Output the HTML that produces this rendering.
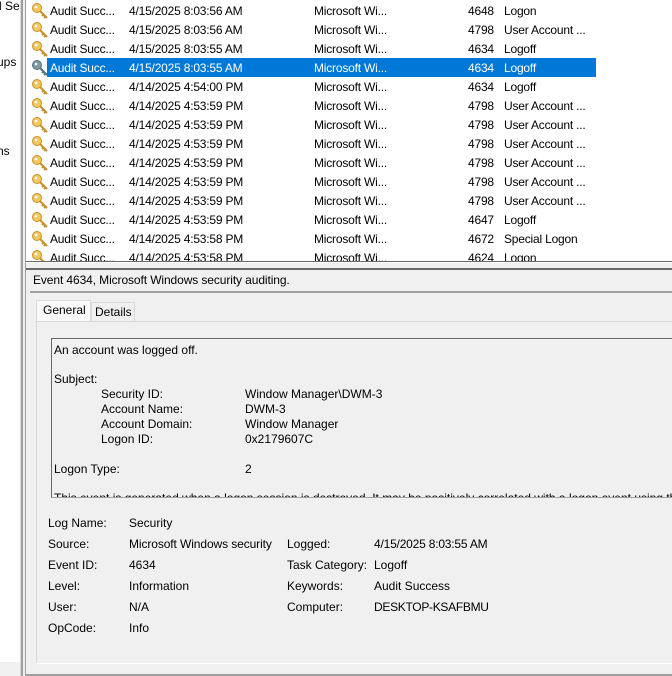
<!DOCTYPE html>
<html><head><style>
*{margin:0;padding:0;box-sizing:border-box}
body{width:672px;height:676px;overflow:hidden;background:#f0f0f0;font-family:"Liberation Sans",sans-serif;font-size:12px;color:#000;position:relative}
.a{position:absolute;white-space:nowrap}
.row{position:absolute;left:0;width:672px;height:19px;letter-spacing:-0.2px}
.row span{position:absolute;top:3px}
.sel{position:absolute;left:47px;width:549px;height:19px;top:0;background:#0078d7}
.s span{color:#fff}
.k{position:absolute;left:31px;top:1px}
</style></head><body>
<div class="a" style="left:0;top:0;width:20px;height:662px;background:#fff"></div>
<div class="a" style="left:0;top:662px;width:20px;height:14px;background:#f0f0f0"></div>
<div class="a" style="left:-1px;top:-1px;">l Se</div>
<div class="a" style="left:-3px;top:55px;">ups</div>
<div class="a" style="left:-3px;top:144px;">ns</div>
<div class="a" style="left:20px;top:0;width:1px;height:676px;background:#d8d8d8"></div>
<div class="a" style="left:21px;top:0;width:2px;height:676px;background:#a0a0a0"></div>
<div class="a" style="left:25px;top:0;width:1px;height:676px;background:#a0a0a0"></div>
<div class="a" style="left:26px;top:0;width:646px;height:261px;background:#fff;overflow:hidden">
<div style="position:relative;left:-26px" id="list"></div>
</div>
<div class="a" style="left:26px;top:261px;width:646px;height:1px;background:#696969"></div>
<div class="a" style="left:26px;top:262px;width:646px;height:1px;background:#fff"></div>
<div class="a" style="left:26px;top:268px;width:646px;height:2px;background:#6a6a6a"></div>
<div class="a" style="left:33px;top:273px;letter-spacing:-0.1px">Event 4634, Microsoft Windows security auditing.</div>
<div class="a" style="left:30px;top:291px;width:642px;height:2px;background:#a0a0a0"></div>
<div class="a" style="left:36px;top:300px;width:55px;height:22px;background:#f9f9f9;border:1px solid #d9d9d9;border-bottom:none"></div>
<div class="a" style="left:43px;top:303px;">General</div>
<div class="a" style="left:91px;top:302px;width:44px;height:19px;border:1px solid #d9d9d9;border-bottom:none"></div>
<div class="a" style="left:95px;top:305px;">Details</div>
<div class="a" style="left:36px;top:321px;width:640px;height:343px;border:1px solid #d9d9d9;border-right:none"></div>
<div class="a" style="left:51px;top:338px;width:625px;height:160px;border-left:1px solid #6a6a6a;border-top:1px solid #6a6a6a;border-bottom:1px solid #a0a0a0;overflow:hidden">
<div class="a" style="left:2px;top:4px">An account was logged off.</div>
<div class="a" style="left:2px;top:33px">Subject:</div>
<div class="a" style="left:49px;top:48px">Security ID:</div><div class="a" style="left:193px;top:48px">Window Manager\DWM-3</div>
<div class="a" style="left:49px;top:63px">Account Name:</div><div class="a" style="left:193px;top:63px">DWM-3</div>
<div class="a" style="left:49px;top:78px">Account Domain:</div><div class="a" style="left:193px;top:78px">Window Manager</div>
<div class="a" style="left:49px;top:93px">Logon ID:</div><div class="a" style="left:193px;top:93px">0x2179607C</div>
<div class="a" style="left:2px;top:123px">Logon Type:</div><div class="a" style="left:193px;top:123px">2</div>
<div class="a" style="left:2px;top:152px">This event is generated when a logon session is destroyed. It may be positively correlated with a logon event using the</div>
</div>
<div class="a" style="left:48px;top:516px">Log Name:</div><div class="a" style="left:129px;top:516px">Security</div>
<div class="a" style="left:48px;top:537px">Source:</div><div class="a" style="left:129px;top:537px;letter-spacing:-0.1px">Microsoft Windows security</div>
<div class="a" style="left:287px;top:537px">Logged:</div><div class="a" style="left:374px;top:537px;letter-spacing:-0.2px">4/15/2025 8:03:55 AM</div>
<div class="a" style="left:48px;top:558px">Event ID:</div><div class="a" style="left:129px;top:558px">4634</div>
<div class="a" style="left:287px;top:558px">Task Category:</div><div class="a" style="left:374px;top:558px">Logoff</div>
<div class="a" style="left:48px;top:579px">Level:</div><div class="a" style="left:129px;top:579px">Information</div>
<div class="a" style="left:287px;top:579px">Keywords:</div><div class="a" style="left:374px;top:579px">Audit Success</div>
<div class="a" style="left:48px;top:600px">User:</div><div class="a" style="left:129px;top:600px">N/A</div>
<div class="a" style="left:287px;top:600px">Computer:</div><div class="a" style="left:374px;top:600px;letter-spacing:-0.3px">DESKTOP-KSAFBMU</div>
<div class="a" style="left:48px;top:621px">OpCode:</div><div class="a" style="left:129px;top:621px">Info</div>
<div class="a" style="left:36px;top:663px;width:636px;height:1px;background:#fff"></div>
<div class="a" style="left:26px;top:674px;width:646px;height:2px;background:#a0a0a0"></div>
<script>
var rows=[["4/15/2025 8:03:56 AM","4648","Logon"],["4/15/2025 8:03:56 AM","4798","User Account ..."],["4/15/2025 8:03:55 AM","4634","Logoff"],["4/15/2025 8:03:55 AM","4634","Logoff"],["4/14/2025 4:54:00 PM","4634","Logoff"],["4/14/2025 4:53:59 PM","4798","User Account ..."],["4/14/2025 4:53:59 PM","4798","User Account ..."],["4/14/2025 4:53:59 PM","4798","User Account ..."],["4/14/2025 4:53:59 PM","4798","User Account ..."],["4/14/2025 4:53:59 PM","4798","User Account ..."],["4/14/2025 4:53:59 PM","4798","User Account ..."],["4/14/2025 4:53:59 PM","4647","Logoff"],["4/14/2025 4:53:58 PM","4672","Special Logon"],["4/14/2025 4:53:58 PM","4624","Logon"]];
var h="";
rows.forEach(function(r,i){var s=i==3;var c=s?"#7e9aa2":"#f2c860";var d=s?"#55727a":"#c8902a";
h+='<div class="row'+(s?' s':'')+'" style="top:'+(1+19*i)+'px">'+(s?'<div class="sel"></div>':'')+
'<svg class="k" width="18" height="17" viewBox="0 0 18 17"><circle cx="6" cy="6" r="4.5" fill="'+c+'" stroke="'+d+'"/><circle cx="5" cy="5" r="1.3" fill="#fff"/><path d="M9 9 L16 16 M12.5 12.5 L11 14 M14.5 14.5 L13 16" stroke="'+d+'" stroke-width="2" fill="none"/></svg>'+
'<span style="left:50px">Audit Succ...</span><span style="left:129px">'+r[0]+'</span><span style="left:314px">Microsoft Wi...</span><span style="left:468px">'+r[1]+'</span><span style="left:504px">'+r[2]+'</span></div>';});
document.getElementById("list").innerHTML=h;
</script>
</body></html>
